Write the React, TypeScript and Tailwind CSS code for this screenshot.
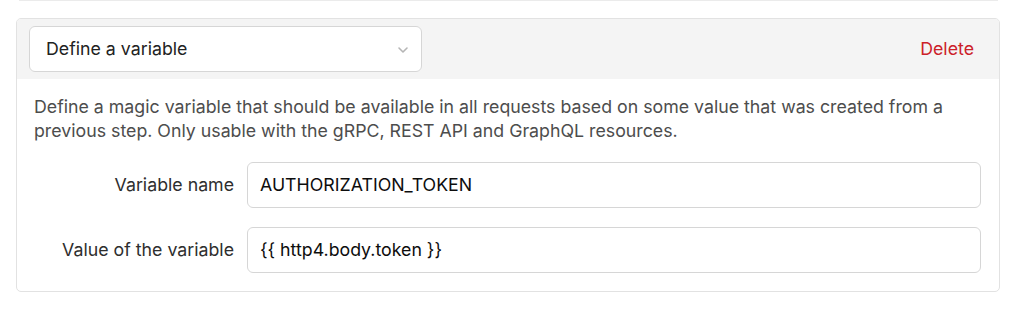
import React from "react";

export default function App() {
  return (
    <div className="w-[1024px] h-[309px] bg-white" style={{ fontFamily: "Inter, 'Noto Sans', sans-serif" }}>
      <div className="ml-[19px] w-[979px] h-[1px] bg-[#ebebeb]" />
      <div className="ml-[16px] mt-[17px] w-[984px] rounded-[5px] border border-[#e2e2e2] overflow-hidden">
        <div className="h-[60px] bg-[#f4f4f4] flex items-center justify-between pl-[12px] pr-[25px]">
          <div className="w-[393px] h-[46px] bg-white border border-[#d6d6d6] rounded-[6px] flex items-center justify-between pl-[16px] pr-[12px]">
            <span className="text-[17.75px] text-[#222222]">Define a variable</span>
            <svg width="12" height="8" viewBox="0 0 12 8" className="mt-[2px]">
              <path d="M2 2 L6 6 L10 2" fill="none" stroke="#b5b5b5" strokeWidth="1.6" strokeLinecap="round" strokeLinejoin="round" />
            </svg>
          </div>
          <button className="text-[17.75px] text-[#cc2129]">Delete</button>
        </div>
        <div className="pl-[17px] pr-[18px] pt-[16px] pb-[18px]">
          <p className="text-[17.75px] leading-[24px] text-[#4d4d4d]">
            Define a magic variable that should be available in all requests based on some value that was created from a previous step. Only usable with the gRPC, REST API and GraphQL resources.
          </p>
          <div className="mt-[19px] flex flex-col gap-[19px]">
            <div className="flex items-center gap-[13px]">
              <label className="w-[200px] text-right text-[17.75px] text-[#2e2e2e]">Variable name</label>
              <div className="flex-1 h-[46px] border border-[#d6d6d6] rounded-[6px] flex items-center px-[12px] text-[17.75px] text-[#0d0d0d]">
                AUTHORIZATION_TOKEN
              </div>
            </div>
            <div className="flex items-center gap-[13px]">
              <label className="w-[200px] text-right text-[17.75px] text-[#2e2e2e]">Value of the variable</label>
              <div className="flex-1 h-[46px] border border-[#d6d6d6] rounded-[6px] flex items-center px-[12px] text-[17.75px] text-[#0d0d0d]">
                {"{{ http4.body.token }}"}
              </div>
            </div>
          </div>
        </div>
      </div>
    </div>
  );
}
